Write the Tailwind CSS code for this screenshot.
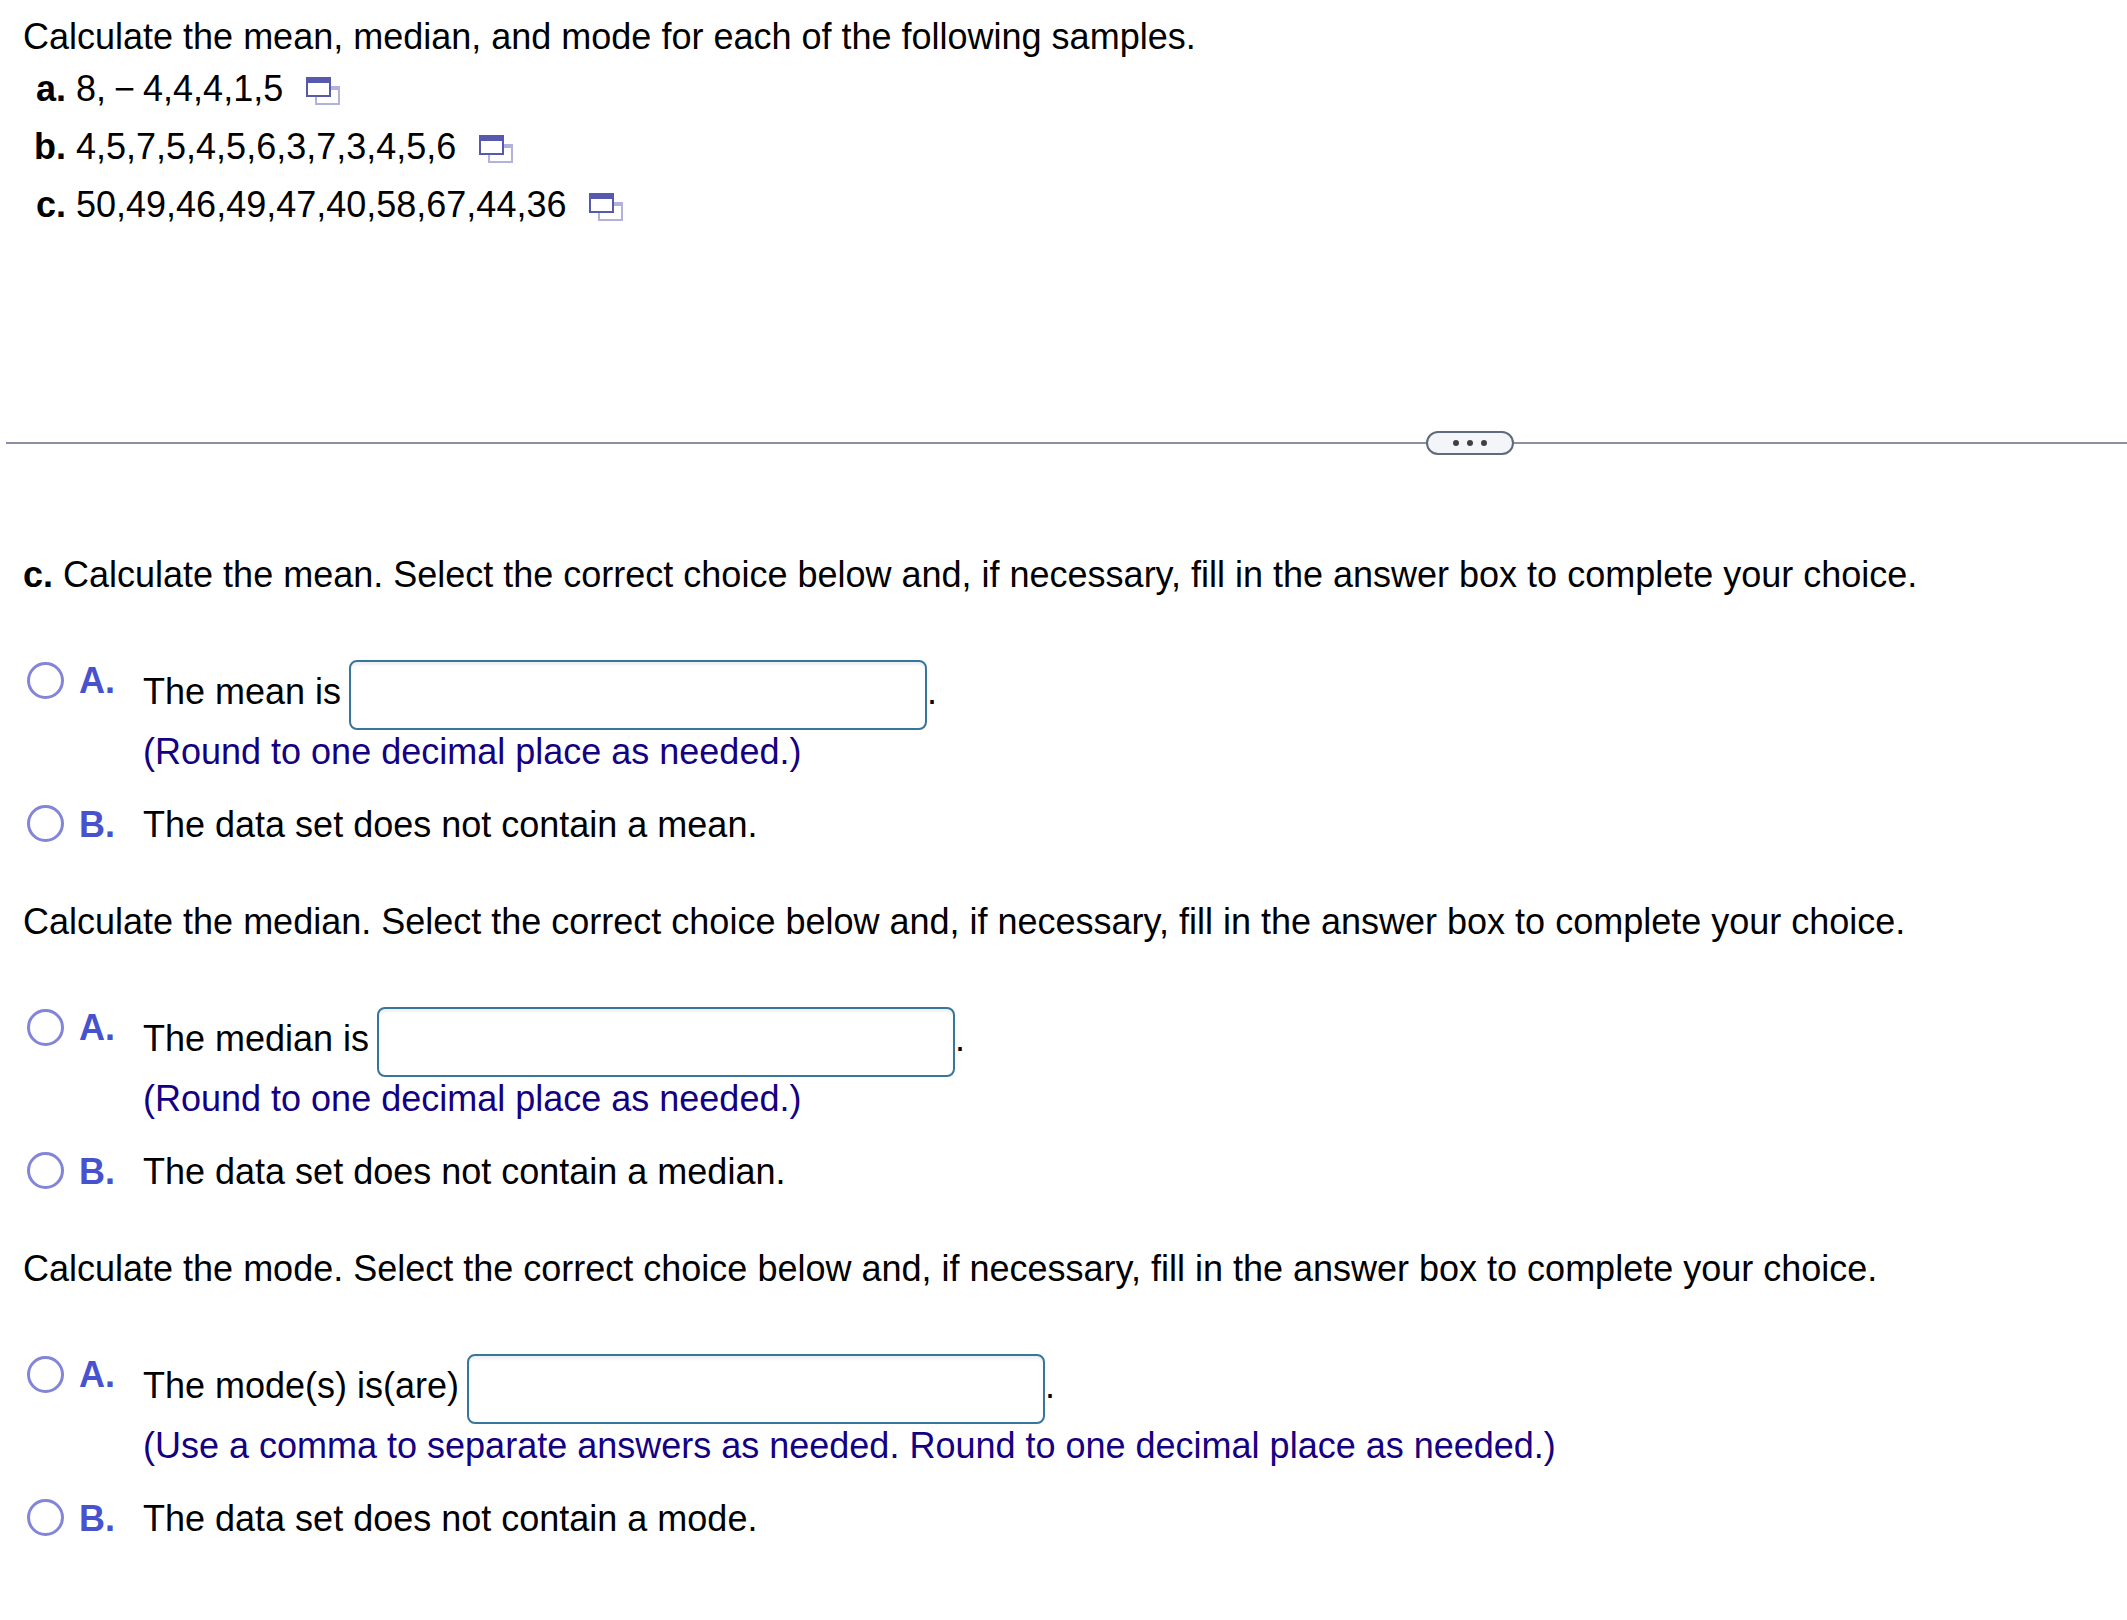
<!DOCTYPE html>
<html lang="en">
<head>
<meta charset="utf-8">
<title>Mean, median, and mode</title>
<script src="https://cdn.jsdelivr.net/npm/@tailwindcss/browser@4"></script>
</head>
<body class="bg-white font-['Liberation_Sans',Arial,sans-serif] text-[36px] leading-10 text-black">
<svg class="hidden" aria-hidden="true">
  <symbol id="copy-data" viewBox="0 0 34 28">
    <rect x="10" y="10" width="23" height="17" fill="#fff" stroke="#b3b2dc" stroke-width="2"/>
    <path d="M9 9h25v4H9z" fill="#b3b2dc"/>
    <rect x="1" y="1" width="23" height="18" fill="#fff" stroke="#5759ae" stroke-width="2"/>
    <path d="M0 0h25v6H0z" fill="#5759ae"/>
  </symbol>
</svg>
<main class="pt-[17px] pb-10">
  <section class="px-[23px]">
    <h1>Calculate the mean, median, and mode for each of the following samples.</h1>
    <ul class="mt-3 flex flex-col gap-[18px]">
      <li class="flex items-start">
        <b class="mr-[10px] w-[43px] text-right">a.</b>
        <span>8,<span class="mx-2">−</span>4,4,4,1,5</span>
        <button type="button" aria-label="Open data set a" class="mt-2 ml-[23px]"><svg class="h-7 w-[34px]"><use href="#copy-data"/></svg></button>
      </li>
      <li class="flex items-start">
        <b class="mr-[10px] w-[43px] text-right">b.</b>
        <span>4,5,7,5,4,5,6,3,7,3,4,5,6</span>
        <button type="button" aria-label="Open data set b" class="mt-2 ml-[23px]"><svg class="h-7 w-[34px]"><use href="#copy-data"/></svg></button>
      </li>
      <li class="flex items-start">
        <b class="mr-[10px] w-[43px] text-right">c.</b>
        <span>50,49,46,49,47,40,58,67,44,36</span>
        <button type="button" aria-label="Open data set c" class="mt-2 ml-[23px]"><svg class="h-7 w-[34px]"><use href="#copy-data"/></svg></button>
      </li>
    </ul>
  </section>

  <div class="mt-[206px] flex items-center pl-1.5">
    <div class="h-0.5 grow bg-[#8c8ea8]"></div>
    <button type="button" aria-label="Resize panes" class="flex h-6 w-[88px] items-center justify-center gap-2 rounded-full border-2 border-[#5f6b7a] bg-[#f3f5f8]">
      <span class="size-1.5 rounded-full bg-[#404040]"></span>
      <span class="size-1.5 rounded-full bg-[#404040]"></span>
      <span class="size-1.5 rounded-full bg-[#404040]"></span>
    </button>
    <div class="h-0.5 w-[613px] bg-[#8c8ea8]"></div>
  </div>

  <form class="mt-[100px] flex flex-col gap-[57px] px-[23px]">
    <fieldset>
      <legend class="pb-[65px]"><b>c.</b> Calculate the mean. Select the correct choice below and, if necessary, fill in the answer box to complete your choice.</legend>
      <div class="flex items-start">
        <input type="radio" name="mean" id="mean-a" class="mt-0.5 ml-1 size-[37px] shrink-0 appearance-none rounded-full border-3 border-[#8385d9] bg-white checked:bg-[#4752cf]">
        <label for="mean-a" class="ml-[15px] w-16 shrink-0 pt-px font-bold text-[#4752cf]">A.</label>
        <div>
          <div class="flex items-center">
            <label for="mean-value" class="mr-2 pb-1.5">The mean is</label>
            <input type="text" id="mean-value" class="h-[70px] w-[578px] rounded-lg border-2 border-[#38759a] bg-white px-3 shadow-[inset_0_3px_3px_#f0f0f4]">
            <span class="pb-1.5">.</span>
          </div>
          <p class="mt-0.5 text-[#140082]">(Round to one decimal place as needed.)</p>
        </div>
      </div>
      <div class="mt-[33px] flex items-start">
        <input type="radio" name="mean" id="mean-b" class="ml-1 size-[37px] shrink-0 appearance-none rounded-full border-3 border-[#8385d9] bg-white checked:bg-[#4752cf]">
        <label for="mean-b" class="ml-[15px] flex"><b class="w-16 text-[#4752cf]">B.</b>The data set does not contain a mean.</label>
      </div>
    </fieldset>

    <fieldset>
      <legend class="pb-[65px]">Calculate the median. Select the correct choice below and, if necessary, fill in the answer box to complete your choice.</legend>
      <div class="flex items-start">
        <input type="radio" name="median" id="median-a" class="mt-0.5 ml-1 size-[37px] shrink-0 appearance-none rounded-full border-3 border-[#8385d9] bg-white checked:bg-[#4752cf]">
        <label for="median-a" class="ml-[15px] w-16 shrink-0 pt-px font-bold text-[#4752cf]">A.</label>
        <div>
          <div class="flex items-center">
            <label for="median-value" class="mr-2 pb-1.5">The median is</label>
            <input type="text" id="median-value" class="h-[70px] w-[578px] rounded-lg border-2 border-[#38759a] bg-white px-3 shadow-[inset_0_3px_3px_#f0f0f4]">
            <span class="pb-1.5">.</span>
          </div>
          <p class="mt-0.5 text-[#140082]">(Round to one decimal place as needed.)</p>
        </div>
      </div>
      <div class="mt-[33px] flex items-start">
        <input type="radio" name="median" id="median-b" class="ml-1 size-[37px] shrink-0 appearance-none rounded-full border-3 border-[#8385d9] bg-white checked:bg-[#4752cf]">
        <label for="median-b" class="ml-[15px] flex"><b class="w-16 text-[#4752cf]">B.</b>The data set does not contain a median.</label>
      </div>
    </fieldset>

    <fieldset>
      <legend class="pb-[65px]">Calculate the mode. Select the correct choice below and, if necessary, fill in the answer box to complete your choice.</legend>
      <div class="flex items-start">
        <input type="radio" name="mode" id="mode-a" class="mt-0.5 ml-1 size-[37px] shrink-0 appearance-none rounded-full border-3 border-[#8385d9] bg-white checked:bg-[#4752cf]">
        <label for="mode-a" class="ml-[15px] w-16 shrink-0 pt-px font-bold text-[#4752cf]">A.</label>
        <div>
          <div class="flex items-center">
            <label for="mode-value" class="mr-2 pb-1.5">The mode(s) is(are)</label>
            <input type="text" id="mode-value" class="h-[70px] w-[578px] rounded-lg border-2 border-[#38759a] bg-white px-3 shadow-[inset_0_3px_3px_#f0f0f4]">
            <span class="pb-1.5">.</span>
          </div>
          <p class="mt-0.5 text-[#140082]">(Use a comma to separate answers as needed. Round to one decimal place as needed.)</p>
        </div>
      </div>
      <div class="mt-[33px] flex items-start">
        <input type="radio" name="mode" id="mode-b" class="ml-1 size-[37px] shrink-0 appearance-none rounded-full border-3 border-[#8385d9] bg-white checked:bg-[#4752cf]">
        <label for="mode-b" class="ml-[15px] flex"><b class="w-16 text-[#4752cf]">B.</b>The data set does not contain a mode.</label>
      </div>
    </fieldset>
  </form>
</main>
</body>
</html>
